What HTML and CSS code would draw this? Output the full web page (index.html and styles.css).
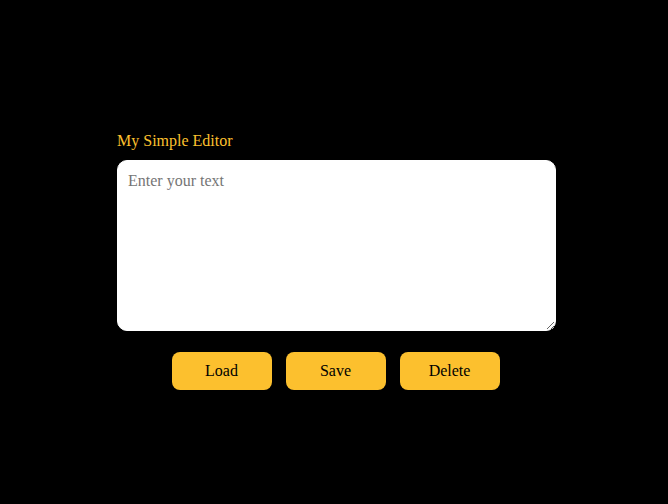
FILE: index.html
```html
<!DOCTYPE html>
<html>
<head>
<meta charset="utf-8">
<link rel="stylesheet" href="styles.css">
</head>
<body>
<div class="page">
  <div class="editor">
    <label class="title" for="text">My Simple Editor</label>
    <textarea id="text" class="area" placeholder="Enter your text"></textarea>
    <div class="actions">
      <button class="btn">Load</button>
      <button class="btn">Save</button>
      <button class="btn">Delete</button>
    </div>
  </div>
</div>
</body>
</html>
```
FILE: styles.css
```css
html, body {
  margin: 0;
  background: #000;
  font-family: "Liberation Serif", "Times New Roman", serif;
}
.page {
  padding: 132px 0 0 117px;
}
.editor {
  width: 439px;
  display: flex;
  flex-direction: column;
}
.title {
  color: #fcc02e;
  font-size: 16px;
  line-height: 18px;
  margin-bottom: 10px;
}
.area {
  box-sizing: border-box;
  display: block;
  width: 439px;
  height: 171px;
  border: 1px solid #fff;
  border-radius: 10px;
  padding: 11px 10px 10px;
  background: #fff;
  font-family: "Liberation Serif", "Times New Roman", serif;
  font-size: 16px;
  color: #000;
  outline: none;
}
.area::placeholder {
  color: #757575;
}
.actions {
  display: flex;
  justify-content: center;
  gap: 14px;
  margin-top: 21px;
  padding-right: 2px;
}
.btn {
  width: 100px;
  height: 38px;
  border: none;
  border-radius: 8px;
  background: #fcc02e;
  color: #000;
  font-family: "Liberation Serif", "Times New Roman", serif;
  font-size: 16px;
  padding: 0;
}
```
